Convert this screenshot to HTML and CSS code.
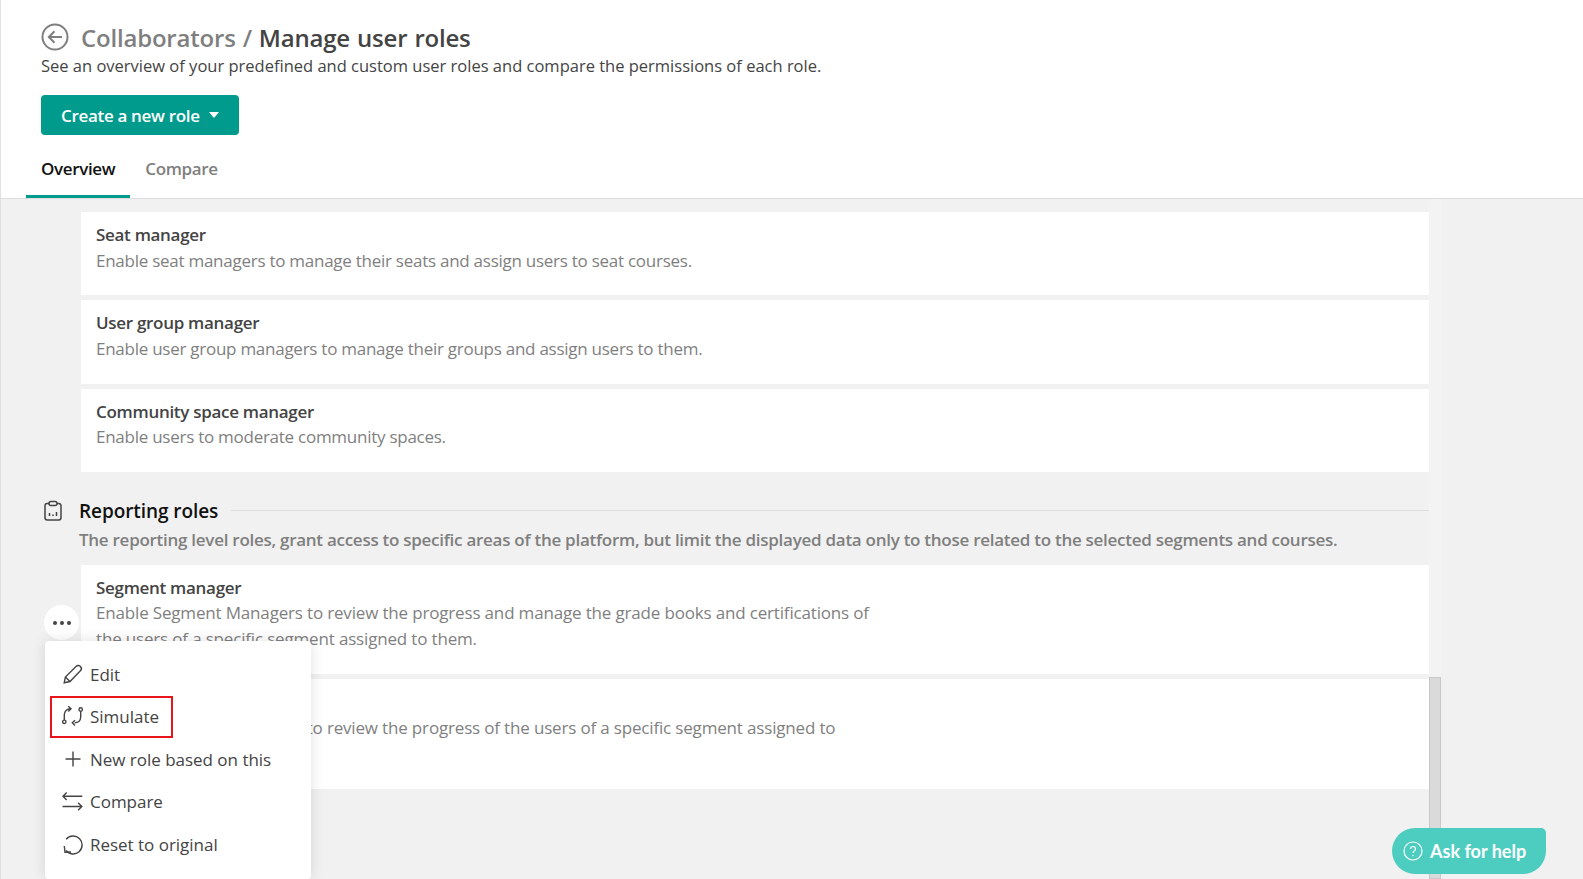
FILE: index.html

```html
<!DOCTYPE html>
<html lang="en">
<head>
    <meta charset="UTF-8">
    <title>Manage user roles</title>
    <link rel="stylesheet" href="styles.css">
</head>
<body>
    <header class="page-head">
        <div class="title-row">
            <svg class="back-icon" viewBox="0 0 28 28" fill="none" stroke="#7f7f7f" stroke-width="2">
                <circle cx="14" cy="14" r="12.500"/>
                <path d="M21 14H8M13.500 8.200 7.800 14l5.700 5.800"/>
            </svg>
            <h1><span class="crumb">Collaborators /</span> Manage user roles</h1>
        </div>
        <p class="subtitle">See an overview of your predefined and custom user roles and compare the permissions of each role.</p>
        <button class="create-btn">Create a new role <span class="caret"></span></button>
        <nav class="tabs">
            <a class="tab active">Overview</a>
            <a class="tab">Compare</a>
        </nav>
    </header>

    <main class="content">
        <div class="scroll-area">
            <div class="card">
                <h3>Seat manager</h3>
                <p>Enable seat managers to manage their seats and assign users to seat courses.</p>
            </div>
            <div class="card">
                <h3>User group manager</h3>
                <p>Enable user group managers to manage their groups and assign users to them.</p>
            </div>
            <div class="card">
                <h3>Community space manager</h3>
                <p>Enable users to moderate community spaces.</p>
            </div>

            <section class="section-head">
                <svg class="section-icon" viewBox="0 0 20 22" fill="none" stroke="#444" stroke-width="1.500">
                    <path d="M6 3.500H4.200C3 3.500 2 4.500 2 5.700v12.100C2 19 3 20 4.200 20h11.600c1.200 0 2.200-1 2.200-2.200V5.700c0-1.200-1-2.200-2.200-2.200H14"/>
                    <rect x="6" y="1.500" width="8" height="4" rx="2"/>
                    <path d="M6.500 16v-3M10 16v-1.500M13.500 16v-4"/>
                </svg>
                <div class="section-title">
                    <h2>Reporting roles</h2>
                    <span class="rule"></span>
                </div>
            </section>
            <p class="section-desc">The reporting level roles, grant access to specific areas of the platform, but limit the displayed data only to those related to the selected segments and courses.</p>

            <div class="card tall">
                <h3>Segment manager</h3>
                <p class="wrap">Enable Segment Managers to review the progress and manage the grade books and certifications of the users of a specific segment assigned to them.</p>
            </div>
            <div class="card tall">
                <h3>Segment reporter</h3>
                <p class="wrap">Enable Segment Reporters to review the progress of the users of a specific segment assigned to<br>them.</p>
            </div>
        </div>
        <div class="scroll-track"><div class="scroll-thumb"></div></div>
    </main>

    <button class="dots-btn"><span></span><span></span><span></span></button>

    <ul class="menu">
        <li>
            <svg viewBox="0 0 22 22" fill="none" stroke="#444" stroke-width="1.400"><path d="M2.200 19.800 3.400 14 14 3.400c1.300-1.300 3.200-1.300 4.400 0 1.300 1.300 1.300 3 0 4.300L8 18.500z"/><path d="M3.400 14 8 18.500"/></svg>
            Edit
        </li>
        <li class="highlighted">
            <svg viewBox="0 0 22 22" fill="none" stroke="#444" stroke-width="1.400"><circle cx="2.300" cy="15.800" r="1.700"/><circle cx="18.700" cy="3.500" r="1.700"/><path d="M2.300 14V9c0-3.500 2.500-6.200 6.300-6.200M6.300.2 9 2.800 6.300 5.500"/><path d="M18.700 5.300V11c0 3.500-2.500 5.800-6 5.800M13 14.200l-2.700 2.600L13 19.500"/></svg>
            Simulate
        </li>
        <li>
            <svg viewBox="0 0 22 22" fill="none" stroke="#444" stroke-width="1.400"><path d="M11 3.500v15M3.500 11h15"/></svg>
            New role based on this
        </li>
        <li>
            <svg viewBox="0 0 22 22" fill="none" stroke="#444" stroke-width="1.400"><path d="M20.300 5.200H1M4.700 1.500 1 5.200l3.700 3.700M.5 15.500h19.300M16.100 11.800l3.700 3.700-3.700 3.700"/></svg>
            Compare
        </li>
        <li>
            <svg viewBox="0 0 22 22" fill="none" stroke="#444" stroke-width="1.400"><path d="M4.200 6.200A9 9 0 1 1 4 17.500"/><path d="M2.300 13 3 19.300l6-.3"/></svg>
            Reset to original
        </li>
    </ul>

    <button class="help-btn">
        <svg viewBox="0 0 20 20" fill="none" stroke="#fff" stroke-width="1.200"><circle cx="10" cy="10" r="9"/><path d="M7.500 8c0-1.500 1-2.500 2.500-2.500S12.500 6.500 12.500 8c0 1.800-2.500 2-2.500 4"/><path d="M10 14v1.200"/></svg>
        Ask for help
    </button>
</body>
</html>
```

FILE: styles.css

```css
/* General Styles */
html, body {
    height: 100%;
}

body {
    margin: 0;
    display: flex;
    flex-direction: column;
    overflow: hidden;
    font-family: 'Open Sans', 'Noto Sans', sans-serif;
    color: #444;
    background: #f1f1f1;
    border-left: 1px solid #e0e0e0;
    box-sizing: border-box;
    position: relative;
}

/* Page Header */
.page-head {
    background: #fff;
    height: 199px;
    flex: none;
    box-sizing: border-box;
    padding: 23px 0 0 40px;
    border-bottom: 1px solid #dcdcdc;
}

.title-row {
    display: flex;
    align-items: center;
    gap: 12px;
    height: 28px;
}

.back-icon {
    width: 28px;
    height: 28px;
}

h1 {
    margin: 0;
    font-size: 24px;
    font-weight: 600;
    letter-spacing: -0.2px;
    word-spacing: 1px;
    color: #444;
}

.crumb {
    color: #7f7f7f;
}

.subtitle {
    margin: 3px 0 0;
    font-size: 16.500px;
    line-height: 23px;
    color: #444;
}

.create-btn {
    display: flex;
    align-items: center;
    gap: 9px;
    margin-top: 18px;
    height: 40px;
    width: 198px;
    padding: 0 0 0 20px;
    border: none;
    border-radius: 4px;
    background: #009b8c;
    color: #fff;
    font-family: inherit;
    font-size: 17px;
    font-weight: 600;
    letter-spacing: -0.32px;
}

.caret {
    border-left: 5px solid transparent;
    border-right: 5px solid transparent;
    border-top: 6px solid #fff;
}

.tabs {
    display: flex;
    margin: 13px 0 0 -15px;
}

.tab {
    padding: 9px 15px 0;
    height: 50px;
    box-sizing: border-box;
    font-size: 17px;
    font-weight: 600;
    letter-spacing: -0.35px;
    color: #7f7f7f;
}

.tab.active {
    color: #111;
    border-bottom: 3px solid #009b8c;
}

/* Scrolling Content */
.content {
    flex: 1;
    display: flex;
    width: 1440px;
    min-height: 0;
    overflow: hidden;
}

.scroll-area {
    flex: 1;
    padding: 13px 0 0 80px;
    box-sizing: border-box;
}

.card {
    background: #fff;
    height: 83.330px;
    box-sizing: border-box;
    padding: 11px 15px 0;
    margin-bottom: 5px;
}

.card.tall {
    height: 109.500px;
}

.card h3 {
    margin: 0;
    font-size: 17px;
    line-height: 24px;
    font-weight: 600;
    letter-spacing: -0.3px;
    color: #444;
}

.card p {
    margin: 0.500px 0 0;
    font-size: 17px;
    line-height: 26px;
    letter-spacing: -0.26px;
    color: #7f7f7f;
}

.card p.wrap {
    max-width: 790px;
    letter-spacing: -0.17px;
}

.section-head {
    display: flex;
    align-items: center;
    margin: 24px 0 0 -38px;
    height: 30px;
}

.section-icon {
    width: 20px;
    height: 22px;
    margin-right: 16px;
}

.section-title {
    flex: 1;
    display: flex;
    align-items: center;
    gap: 13px;
}

h2 {
    margin: 0;
    font-size: 19px;
    font-weight: 600;
    letter-spacing: -0.07px;
    color: #111;
}

.rule {
    flex: 1;
    height: 1px;
    background: #dedede;
}

.section-desc {
    margin: 1px 0 12px -2px;
    font-size: 17px;
    line-height: 26px;
    font-weight: 600;
    letter-spacing: -0.27px;
    color: #7f7f7f;
}

.scroll-track {
    width: 12px;
    background: #f3f3f3;
    display: flex;
    flex-direction: column;
    justify-content: flex-end;
}

.scroll-thumb {
    height: 202px;
    background: #dadada;
    border: 1px solid #c8c8c8;
    box-sizing: border-box;
}

/* Row Menu */
.dots-btn {
    position: absolute;
    left: 43px;
    top: 605px;
    width: 35px;
    height: 35px;
    border: none;
    border-radius: 50%;
    padding: 0;
    background: #fff;
    display: flex;
    align-items: center;
    justify-content: center;
    gap: 3px;
}

.dots-btn span {
    width: 4px;
    height: 4px;
    border-radius: 50%;
    background: #444;
}

.menu {
    position: absolute;
    left: 44px;
    top: 641px;
    width: 266px;
    height: 238px;
    margin: 0;
    padding: 12px 0 0 5px;
    box-sizing: border-box;
    list-style: none;
    background: #fff;
    border-radius: 4px;
    box-shadow: 0 0 14px rgba(0, 0, 0, 0.12);
}

.menu li {
    display: flex;
    align-items: center;
    gap: 6px;
    height: 42.500px;
    padding-left: 12px;
    font-size: 17px;
    letter-spacing: -0.02px;
    color: #444;
    box-sizing: border-box;
}

.menu li svg {
    width: 22px;
    height: 22px;
}

.menu li.highlighted {
    outline: 2px solid #e8141c;
    outline-offset: -2px;
    width: 123px;
}

/* Help Button */
.help-btn {
    position: absolute;
    left: 1391px;
    top: 828px;
    width: 154px;
    height: 46px;
    border: none;
    border-radius: 23px 5px 23px 23px;
    background: #4ccdc0;
    color: #fff;
    font-family: 'Lato', sans-serif;
    font-size: 18px;
    font-weight: 700;
    display: flex;
    align-items: center;
    gap: 7px;
    padding: 0 0 0 11px;
    box-sizing: border-box;
}

.help-btn svg {
    width: 20px;
    height: 20px;
}
```
